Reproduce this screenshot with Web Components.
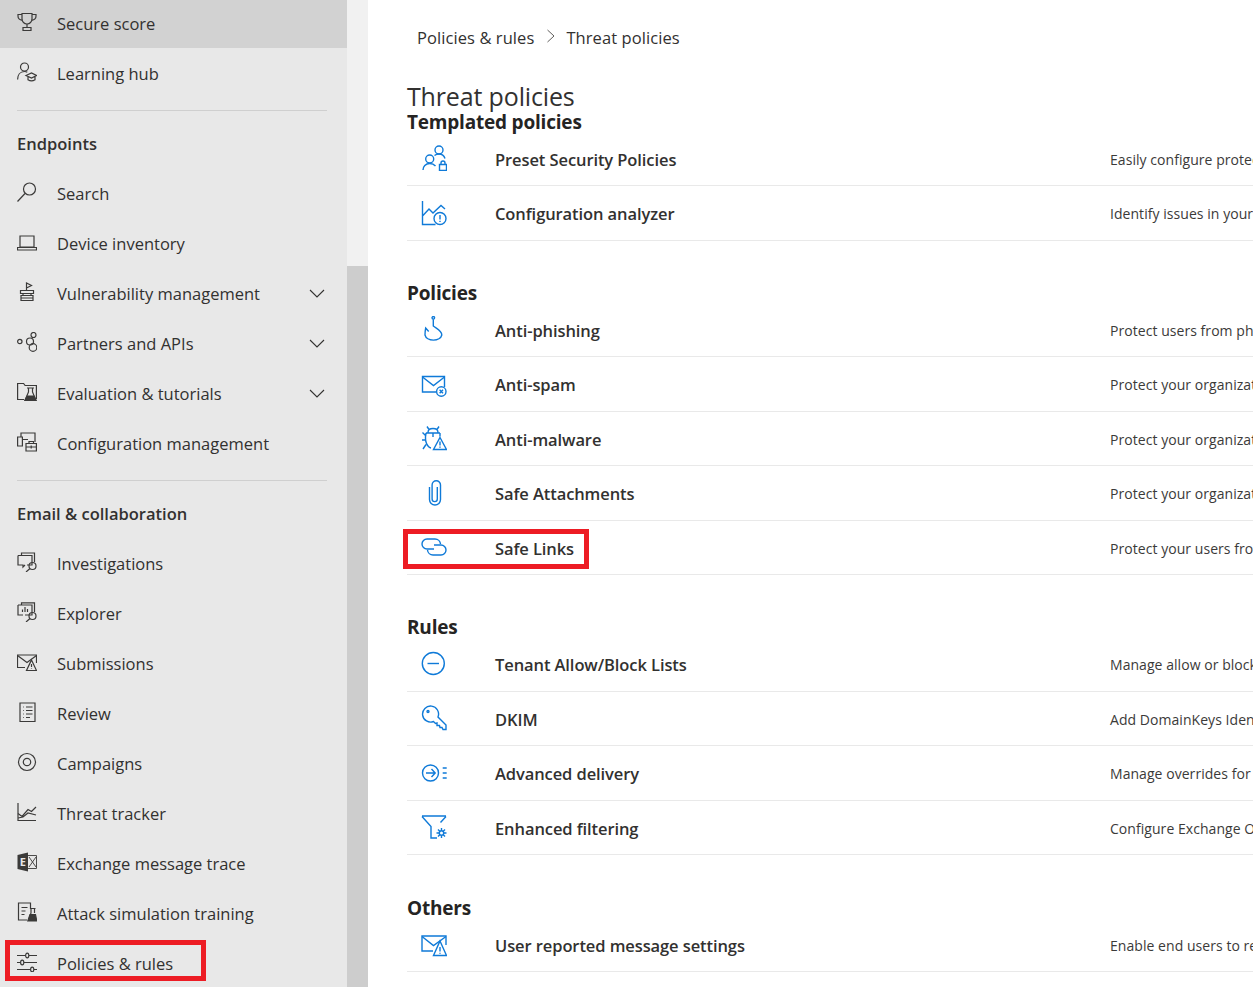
<!DOCTYPE html>
<html><head><meta charset="utf-8">
<style>
html,body{margin:0;padding:0;height:987px;overflow:hidden;background:#fff}
body{font-family:"Open Sans","Noto Sans",sans-serif;display:flex}
</style></head>
<body>
<side-nav></side-nav>
<main-pane></main-pane>
<script>
const S=(inner)=>`<svg viewBox="0 0 20 20" width="20" height="20" fill="none" stroke="currentColor" stroke-width="1.200">${inner}</svg>`;
const NAV={
trophy:S('<path d="M5 1.500h10v5.500a5 5 0 0 1-10 0z"/><path d="M5 2.500H1v1.500A3.800 3.800 0 0 0 5.500 8M15 2.500h4v1.500A3.800 3.800 0 0 1 14.500 8M10 12v3M6 15.500h8v3H6z"/>'),
learn:S('<circle cx="7.500" cy="5" r="4"/><path d="M.6 17.500c0-4.500 2.500-8 6.900-8 1 0 2 .2 2.800.7"/><path d="M9 13.500l5.500-2.500 5 2.500-5 2.500zM11 15v2.800c2 1.300 5 1.300 7 0V15"/>'),
search:S('<circle cx="12.500" cy="7" r="6"/><path d="M8 11.500L.5 19.500"/>'),
laptop:S('<path d="M3 4h14v11H3zM.5 15.500h19V18H.5z"/>'),
vuln:S('<path d="M9.500 8V1l5 2.500-5 2.500M3.500 8.500h13v3h-13zM6 11.500v2M14 11.500v2M4 13.500h12v5H4zM4 16h12"/>'),
partners:S('<circle cx="2.800" cy="9.500" r="2.200"/><circle cx="16.500" cy="3" r="2.500"/><circle cx="16" cy="15.500" r="3.800"/><circle cx="13" cy="9.500" r="3.500"/>'),
evaluate:S('<path d="M7 17.500H.6V1.500h6l1.500 2h11.300V17"/><path d="M10 6h7M11.500 6v4L8 18.500h11L15.500 10V6"/><path d="M10 14h7l2 4.500H8z" fill="currentColor"/>'),
config:S('<path d="M4 4.500V1h14v9M.6 5h4.800v9H.6zM5.500 7.500H11"/><path d="M9 11.500h10.400v7.500H9zM12 11.500V9.500h4.500v2M9 15h10.400M14.200 13.500v3"/>'),
invest:S('<path d="M4.500 3.500V1h13v9M1 3.500h14V13H10M1 3.500V13h5v2l2-2"/><circle cx="15.500" cy="14" r="3.500"/><path d="M13 16.500L9 20"/>'),
explorer:S('<path d="M4.500 3V.8h13V10M1 3h14v10H8M1 3v10h5"/><path d="M5.500 10V7.500M8 10V5M10.500 10V7"/><circle cx="15.500" cy="14" r="3.500"/><path d="M13 16.500L9 20"/>'),
submit:S('<path d="M8 15.500H.5V3h19v8"/><path d="M.5 3.500l9.500 7 9.500-7"/><path d="M14.500 8l5 10.500h-10zM14.500 12v3M14.500 16.500v.5"/>'),
review:S('<path d="M3 1h15v18.500H3zM6 5h.7M9 5h6.500M6 8.500h.7M9 8.500h6.500M6 12h.7M9 12h6.500M6 15.500h.7M9 15.500h4"/>'),
campaign:S('<circle cx="10" cy="10" r="8.500"/><circle cx="10" cy="10" r="3.700"/>'),
tracker:S('<path d="M1 1v17.500h18"/><path d="M1 11.500l4 3 6-7 3.500 2L19 5M1 16l5-1 5-4 8 2"/>'),
exchange:S('<path d="M11 .5v19L.5 17V3z" fill="currentColor" stroke="none"/><path d="M11 3.500h8.500v13H11M12 5l7 10M19 5l-7 10" stroke-width=".9"/><text x="2.800" y="14.300" font-family="Open Sans" font-size="11" font-weight="700" fill="#e8e8e8" stroke="none">E</text>'),
attack:S('<path d="M10 18H1.500V1h12v6M4.500 5.500h6M4.500 9h4M4.500 12.500h3M13 6.500h5.500M14 7v4l-2 6M17.500 7v4"/><path d="M13 12.500h5.500l1.300 6.500H10.800z" fill="currentColor"/>'),
sliders:S('<path d="M0 3.500h8.500M12 3.500h8M0 10.500h3.500M7 10.500h13M0 17.500h13.500M17 17.500h3"/><ellipse cx="10.200" cy="3.500" rx="1.600" ry="2.300"/><ellipse cx="5.200" cy="10.500" rx="1.600" ry="2.300"/><ellipse cx="15.200" cy="17.500" rx="1.600" ry="2.300"/>')
};
const B=(inner)=>`<svg viewBox="0 0 26 26" width="26" height="26" fill="none" stroke="currentColor" stroke-width="1.400">${inner}</svg>`;
const BLUE={
preset:B('<circle cx="18" cy="5" r="4"/><circle cx="8.700" cy="14" r="4"/><path d="M2 25c0-3.500 2.500-6.500 6.700-6.500 2.500 0 4.500 1 5.800 2.500M13.500 10.500c1-.8 2.800-1.500 4.500-1.500 3 0 5 1.500 6 4.500"/><path d="M18.500 19.500h7v6h-7zM20 19.500V18a2 2 0 0 1 4 0v1.500"/>'),
analyzer:B('<path d="M1.500 1v23.500h13M1.500 16l6.500-7 4 4 8-7.500 4 3.500"/><circle cx="19" cy="18.500" r="6"/><path d="M19 15v4.500M19 20.800V22"/>'),
hook:B('<circle cx="12.300" cy="1.800" r="1.300"/><path d="M12.300 3.200V10c3 2.500 8.500 4.500 8.500 9A8.500 6 0 0 1 4 19c0-2 .3-5 .7-7l3 3.500"/>'),
spam:B('<path d="M15 21H1.500V5.500h22V16"/><path d="M1.500 6l11 8.500 11-8.500"/><circle cx="20.300" cy="20.500" r="4.700"/><path d="M18.600 18.800l3.400 3.400M22 18.800l-3.400 3.400"/>'),
malware:B('<path d="M7 7.500c0-2.500 2-4 5-4s5 1.500 5 4M5 8h14M12 8v4M5 8c-1 5-.5 10 2 13 .8 1 2 1.800 3 2M19 8v3.500M6 1.500L8 4.500M18 1.500L16 4.500M1.500 7.500L5 11M1 15h3.500M2 24l3-4.500"/><path d="M19 12.500l6.500 12h-13zM19 16.500v4M19 21.500v1.200"/>'),
clip:B('<path d="M8.500 7v12.500a5.500 5.500 0 0 0 11 0V5a4.200 4.200 0 0 0-8.400 0v14a2.600 2.600 0 0 0 5.200 0V7"/>'),
link:B('<path d="M13 15H6a5 5 0 0 1 0-10h8a5.500 5.500 0 0 1 5.500 5"/><path d="M13 11h7a5 5 0 0 1 0 10h-8a5.500 5.500 0 0 1-5.500-5"/>'),
block:B('<circle cx="12.300" cy="12.500" r="11"/><path d="M6.500 12.500h11.500"/>'),
key:B('<path d="M17 12a8 8 0 1 0-4.500 4.500l2 2 1.500-.5v2.500h2.500l.5 2h2l1 2h3v-4.500z"/><circle cx="7" cy="6.500" r="1"/>'),
delivery:B('<circle cx="9.500" cy="13" r="8"/><path d="M5 13h9M10.500 9l3.700 4-3.700 4M21.700 8h4M21.700 13h4M21.700 18h4"/>'),
filter:B('<path d="M1 2h24M1 2.500l9 10V24h6M25 2.500l-5.500 6"/><circle cx="20.500" cy="19" r="2.200"/><path d="M20.500 14v2.500M20.500 21.500V24M15.500 19H18M23 19h2.500M17 15.500l2 2M22 20.500l2 2M24 15.500l-2 2M19 20.500l-2 2"/>'),
report:B('<path d="M12 20H1V5h24v9"/><path d="M1 5.500l11.500 9 12.500-9"/><path d="M19 10l6.500 14.500h-13zM19 16v4.500M19 21.800v1"/>')
};
class NavItem extends HTMLElement{
 constructor(){super();const a=this.attachShadow({mode:'open'});
 const ic=NAV[this.getAttribute('icon')]||'';const ex=this.hasAttribute('expand');
 a.innerHTML=`<style>
 :host{display:flex;align-items:center;height:50px;padding:0 20px 2px 17px;box-sizing:border-box;color:#323130;font-size:16.500px;letter-spacing:0}
 :host([active]){background:#d2d2d2;height:48px}
 .i{width:20px;height:20px;margin:0 20px 2px 0;display:flex;color:#3b3a39}
 .t{flex:1;white-space:nowrap}
 .c{width:20px;height:20px;display:flex;color:#323130}
 </style><span class="i">${ic}</span><span class="t"><slot></slot></span>${ex?`<span class="c"><svg viewBox="0 0 20 20" width="20" height="20" fill="none" stroke="currentColor" stroke-width="1.100"><path d="M3 7l7 7 7-7"/></svg></span>`:''}`;
 }
}
customElements.define('nav-item',NavItem);
class NavHead extends HTMLElement{
 constructor(){super();this.attachShadow({mode:'open'}).innerHTML=`<style>
 :host{display:block;height:40px;line-height:39px;padding-left:17px;font-size:16.500px;font-weight:600;color:#323130;letter-spacing:0;box-sizing:border-box}
 </style><slot></slot>`;}
}
customElements.define('nav-head',NavHead);
class NavRule extends HTMLElement{
 constructor(){super();this.attachShadow({mode:'open'}).innerHTML=`<style>
 :host{display:block;height:1px;background:#cfcfcf;margin:0 20px 0 17px}
 </style>`;}
}
customElements.define('nav-rule',NavRule);
class SideNav extends HTMLElement{
 constructor(){super();this.attachShadow({mode:'open'}).innerHTML=`<style>
 :host{display:flex;flex:none;width:368px;height:987px;background:#f0f0f0}
 .col{width:347px;background:#e8e8e8;overflow:hidden;flex:none}
 .track{flex:1;display:flex;flex-direction:column}
 .track i{display:block;height:266px;background:#f1f1f1}
 .track b{display:block;flex:1;background:#cdcdcd}
 .hl{position:absolute;left:5px;top:940px;width:201px;height:41px;box-sizing:border-box;border:5px solid #ed1c24;pointer-events:none}
 </style>
 <div class="col">
 <nav-item active icon="trophy">Secure score</nav-item>
 <nav-item icon="learn" style="padding-top:2px">Learning hub</nav-item>
 <div style="height:12px"></div><nav-rule></nav-rule><div style="height:13px"></div>
 <nav-head>Endpoints</nav-head>
 <div style="height:5px"></div>
 <nav-item icon="search">Search</nav-item>
 <nav-item icon="laptop">Device inventory</nav-item>
 <nav-item icon="vuln" expand>Vulnerability management</nav-item>
 <nav-item icon="partners" expand>Partners and APIs</nav-item>
 <nav-item icon="evaluate" expand>Evaluation &amp; tutorials</nav-item>
 <nav-item icon="config">Configuration management</nav-item>
 <div style="height:11px"></div><nav-rule></nav-rule><div style="height:13px"></div>
 <nav-head>Email &amp; collaboration</nav-head>
 <div style="height:5px"></div>
 <nav-item icon="invest">Investigations</nav-item>
 <nav-item icon="explorer">Explorer</nav-item>
 <nav-item icon="submit">Submissions</nav-item>
 <nav-item icon="review">Review</nav-item>
 <nav-item icon="campaign">Campaigns</nav-item>
 <nav-item icon="tracker">Threat tracker</nav-item>
 <nav-item icon="exchange">Exchange message trace</nav-item>
 <nav-item icon="attack">Attack simulation training</nav-item>
 <nav-item icon="sliders">Policies &amp; rules</nav-item>
 </div>
 <div class="track"><i></i><b></b></div>
 <div class="hl"></div>`;}
}
customElements.define('side-nav',SideNav);
class PolicyRow extends HTMLElement{
 constructor(){super();const ic=BLUE[this.getAttribute('icon')]||'';
 this.attachShadow({mode:'open'}).innerHTML=`<style>
 :host{display:flex;align-items:center;height:54.500px;padding-top:1.800px;border-bottom:1px solid #e9e9e9;box-sizing:border-box;position:relative;color:#323130;white-space:nowrap}
 .i{position:absolute;left:14px;top:50%;margin-top:-13px;width:26px;height:26px;color:#0f7ad8}
 .n{margin-left:88px;width:615px;flex:none;font-size:16.500px;font-weight:600;letter-spacing:-.09px;color:#323130}
 .d{font-size:14px;letter-spacing:.05px;color:#3b3a39}
 </style><span class="i">${ic}</span><span class="n"><slot></slot></span><span class="d">${this.getAttribute('desc')}</span>`;}
}
customElements.define('policy-row',PolicyRow);
class PolicyGroup extends HTMLElement{
 constructor(){super();this.attachShadow({mode:'open'}).innerHTML=`<style>
 :host{display:block}
 h2{margin:0;padding-bottom:1px;font-size:19px;font-weight:700;line-height:17px;color:#252423;letter-spacing:-.2px}
 </style><h2>${this.getAttribute('title')}</h2><slot></slot>`;}
}
customElements.define('policy-group',PolicyGroup);
class MainPane extends HTMLElement{
 constructor(){super();this.attachShadow({mode:'open'}).innerHTML=`<style>
 :host{display:block;flex:1;min-width:0;overflow:hidden;height:987px;padding:0 0 0 39px;box-sizing:border-box;position:relative}
 .crumb{display:flex;align-items:center;height:24px;margin:25px 0 0 10px;font-size:16.500px;letter-spacing:.08px;color:#323130;white-space:nowrap}
 .crumb svg{margin:0 10px 0 12px;transform:translateY(-1px)}
 h1{margin:32px 0 2.500px;font-size:25px;font-weight:400;line-height:30px;color:#323130;letter-spacing:-.15px}
 .wrap{width:1000px}
 .hl{position:absolute;left:35px;top:529px;width:186px;height:40px;box-sizing:border-box;border:5px solid #ed1c24}
 .g{height:44px}
 .g2{height:44.500px}
 </style>
 <div class="crumb"><span>Policies &amp; rules</span><svg viewBox="0 0 10 16" width="10" height="16" fill="none" stroke="#605e5c" stroke-width="1"><path d="M1.500 2l6.500 6-6.500 6"/></svg><span>Threat policies</span></div>
 <h1>Threat policies</h1>
 <div class="wrap">
 <policy-group title="Templated policies">
 <policy-row icon="preset" desc="Easily configure protection">Preset Security Policies</policy-row>
 <policy-row icon="analyzer" desc="Identify issues in your current">Configuration analyzer</policy-row>
 </policy-group>
 <div class="g"></div>
 <policy-group title="Policies">
 <policy-row icon="hook" desc="Protect users from phishing">Anti-phishing</policy-row>
 <policy-row icon="spam" desc="Protect your organization">Anti-spam</policy-row>
 <policy-row icon="malware" desc="Protect your organization">Anti-malware</policy-row>
 <policy-row icon="clip" desc="Protect your organization">Safe Attachments</policy-row>
 <policy-row icon="link" desc="Protect your users from">Safe Links</policy-row>
 </policy-group>
 <div class="g"></div>
 <policy-group title="Rules">
 <policy-row icon="block" desc="Manage allow or block">Tenant Allow/Block Lists</policy-row>
 <policy-row icon="key" desc="Add DomainKeys Identified">DKIM</policy-row>
 <policy-row icon="delivery" desc="Manage overrides for">Advanced delivery</policy-row>
 <policy-row icon="filter" desc="Configure Exchange Online">Enhanced filtering</policy-row>
 </policy-group>
 <div class="g2"></div>
 <policy-group title="Others">
 <policy-row icon="report" desc="Enable end users to report">User reported message settings</policy-row>
 </policy-group>
 </div>
 <div class="hl"></div>`;}
}
customElements.define('main-pane',MainPane);
</script>
</body></html>
